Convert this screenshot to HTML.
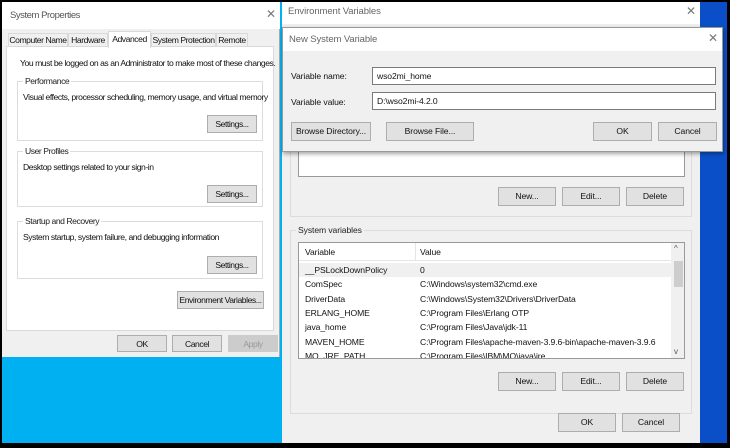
<!DOCTYPE html>
<html><head><style>
*{box-sizing:border-box;margin:0;padding:0}
body{width:730px;height:448px;overflow:hidden;background:#000;font-family:"Liberation Sans",sans-serif;font-size:8.6px;color:#111;position:relative;white-space:nowrap;letter-spacing:-0.1px}
.a{position:absolute}
.btn{position:absolute;background:#e1e1e1;border:1px solid #adadad;text-align:center;line-height:16px}
.grp{position:absolute;border:1px solid #dcdcdc}
.lg{position:absolute;top:-6px;left:5px;background:#fff;padding:0 2px;color:#222}
.inp{position:absolute;background:#fff;border:1px solid #7a7a7a;padding-left:4px;line-height:16px}
.row{position:absolute;left:0;width:372px;height:14px;line-height:14px}
.row span{position:absolute}
.x{position:absolute;color:#777;font-size:12px;font-weight:normal;letter-spacing:0}
.t{position:absolute;border:1px solid #d9d9d9;border-bottom:none;text-align:center;line-height:13px;height:14px;top:31px;overflow:hidden}
#sp{letter-spacing:-0.45px}
</style></head><body>
<div class="a" style="left:2px;top:2px;width:725px;height:441px;background:#00b0f0"></div>
<div class="a" style="left:700px;top:2px;width:27px;height:441px;background:#0a4fc8"></div>

<!-- System Properties -->
<div id="sp" class="a" style="left:2px;top:2px;width:278px;height:355px;background:#f0f0f0;border-right:1px solid #aaa">
 <div class="a" style="left:0;top:0;width:278px;height:27px;background:#fff"></div>
 <div class="a" style="left:8px;top:8px;color:#555;font-size:9.5px">System Properties</div>
 <div class="x" style="left:264px;top:5px">✕</div>
 <div class="a" style="left:4px;top:44px;width:268px;height:285px;background:#fff;border:1px solid #d9d9d9"></div>
 <div class="t" style="left:6px;width:60px">Computer Name</div>
 <div class="t" style="left:66px;width:40px">Hardware</div>
 <div class="t" style="left:106px;top:29px;width:43px;height:17px;background:#fff;line-height:14px">Advanced</div>
 <div class="t" style="left:149px;width:65px">System Protection</div>
 <div class="t" style="left:214px;width:32px">Remote</div>
 <div class="a" style="left:18px;top:56px">You must be logged on as an Administrator to make most of these changes.</div>
 <div class="grp" style="left:15px;top:79px;width:246px;height:60px"><span class="lg">Performance</span><span class="a" style="left:5px;top:10px">Visual effects, processor scheduling, memory usage, and virtual memory</span></div>
 <div class="btn" style="left:205px;top:113px;width:50px;height:18px">Settings...</div>
 <div class="grp" style="left:15px;top:149px;width:246px;height:56px"><span class="lg">User Profiles</span><span class="a" style="left:5px;top:10px">Desktop settings related to your sign-in</span></div>
 <div class="btn" style="left:205px;top:183px;width:50px;height:18px">Settings...</div>
 <div class="grp" style="left:15px;top:219px;width:246px;height:58px"><span class="lg">Startup and Recovery</span><span class="a" style="left:5px;top:10px">System startup, system failure, and debugging information</span></div>
 <div class="btn" style="left:205px;top:254px;width:50px;height:18px">Settings...</div>
 <div class="btn" style="left:175px;top:289px;width:87px;height:18px">Environment Variables...</div>
 <div class="btn" style="left:115px;top:333px;width:50px;height:17px">OK</div>
 <div class="btn" style="left:170px;top:333px;width:50px;height:17px">Cancel</div>
 <div class="btn" style="left:226px;top:333px;width:50px;height:17px;color:#999;border-color:#ccc;background:#ccc">Apply</div>
</div>

<!-- Environment Variables -->
<div class="a" style="left:282px;top:2px;width:418px;height:441px;background:#f0f0f0">
 <div class="a" style="left:0;top:0;width:418px;height:22px;background:#fff"></div>
 <div class="a" style="left:6px;top:4px;color:#666;font-size:9.5px">Environment Variables</div>
 <div class="x" style="left:404px;top:2px">✕</div>
 <div class="grp" style="left:8px;top:40px;width:402px;height:175px"></div>
 <div class="a" style="left:16px;top:120px;width:387px;height:55px;background:#fff;border:1px solid #999"></div>
 <div class="btn" style="left:216px;top:185px;width:58px;height:19px">New...</div>
 <div class="btn" style="left:280px;top:185px;width:58px;height:19px">Edit...</div>
 <div class="btn" style="left:344px;top:185px;width:58px;height:19px">Delete</div>
 <div class="grp" style="left:8px;top:228px;width:402px;height:184px"><span class="lg" style="background:#f0f0f0">System variables</span></div>
 <div class="a" style="left:16px;top:240px;width:387px;height:117px;background:#fff;border:1px solid #999;overflow:hidden">
  <div class="a" style="left:0;top:0;width:372px;height:18px;border-bottom:1px solid #e5e5e5"></div>
  <div class="a" style="left:116px;top:0;width:1px;height:18px;background:#e5e5e5"></div>
  <div class="a" style="left:6px;top:4px">Variable</div><div class="a" style="left:121px;top:4px">Value</div>
  <div class="row" style="top:20px;background:#f0f0f0"><span style="left:6px">__PSLockDownPolicy</span><span style="left:121px">0</span></div>
  <div class="row" style="top:34px"><span style="left:6px">ComSpec</span><span style="left:121px">C:\Windows\system32\cmd.exe</span></div>
  <div class="row" style="top:49px"><span style="left:6px">DriverData</span><span style="left:121px">C:\Windows\System32\Drivers\DriverData</span></div>
  <div class="row" style="top:63px"><span style="left:6px">ERLANG_HOME</span><span style="left:121px">C:\Program Files\Erlang OTP</span></div>
  <div class="row" style="top:77px"><span style="left:6px">java_home</span><span style="left:121px">C:\Program Files\Java\jdk-11</span></div>
  <div class="row" style="top:92px"><span style="left:6px">MAVEN_HOME</span><span style="left:121px">C:\Program Files\apache-maven-3.9.6-bin\apache-maven-3.9.6</span></div>
  <div class="row" style="top:106px"><span style="left:6px">MQ_JRE_PATH</span><span style="left:121px">C:\Program Files\IBM\MQ\java\jre</span></div>
  <div class="a" style="left:372px;top:0;width:14px;height:117px;background:#f0f0f0"></div>
  <div class="a" style="left:375px;top:18px;width:9px;height:26px;background:#cdcdcd"></div>
  <div class="a" style="left:375px;top:1px;font-size:8px;color:#555">^</div>
  <div class="a" style="left:375px;top:104px;font-size:8px;color:#555">v</div>
 </div>
 <div class="btn" style="left:216px;top:370px;width:58px;height:19px">New...</div>
 <div class="btn" style="left:280px;top:370px;width:58px;height:19px">Edit...</div>
 <div class="btn" style="left:344px;top:370px;width:58px;height:19px">Delete</div>
 <div class="btn" style="left:276px;top:411px;width:58px;height:19px">OK</div>
 <div class="btn" style="left:340px;top:411px;width:58px;height:19px">Cancel</div>
</div>

<!-- New System Variable -->
<div class="a" style="left:282px;top:27px;width:441px;height:125px;background:#f0f0f0;border:1px solid #999;box-shadow:1px 2px 4px rgba(0,0,0,.35)">
 <div class="a" style="left:0;top:0;width:439px;height:23px;background:#fff"></div>
 <div class="a" style="left:6px;top:6px;color:#666;font-size:9.5px">New System Variable</div>
 <div class="x" style="left:425px;top:3px">✕</div>
 <div class="a" style="left:8px;top:43px">Variable name:</div>
 <div class="a" style="left:8px;top:69px">Variable value:</div>
 <div class="inp" style="left:89px;top:39px;width:344px;height:18px">wso2mi_home</div>
 <div class="inp" style="left:89px;top:64px;width:344px;height:18px">D:\wso2mi-4.2.0</div>
 <div class="btn" style="left:8px;top:94px;width:80px;height:19px">Browse Directory...</div>
 <div class="btn" style="left:103px;top:94px;width:88px;height:19px">Browse File...</div>
 <div class="btn" style="left:310px;top:94px;width:59px;height:19px">OK</div>
 <div class="btn" style="left:375px;top:94px;width:59px;height:19px">Cancel</div>
</div>
</body></html>
